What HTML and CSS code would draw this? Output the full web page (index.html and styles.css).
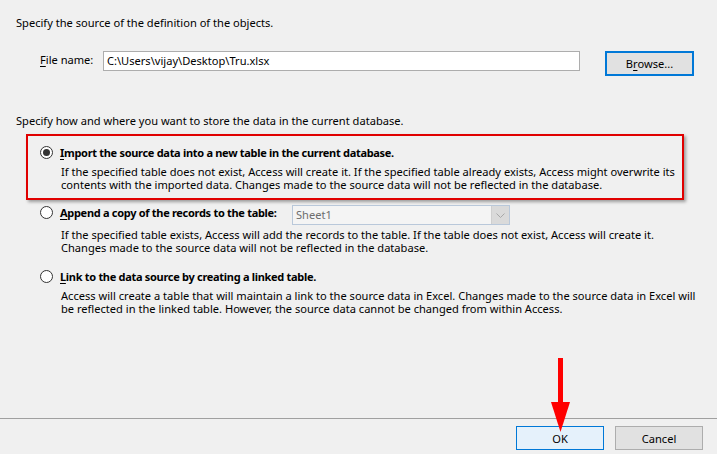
FILE: index.html
```html
<!DOCTYPE html>
<html lang="en">
<head>
    <meta charset="UTF-8">
    <title>Get External Data - Excel Spreadsheet</title>
    <link rel="stylesheet" href="styles.css">
</head>
<body>
    <div class="dialog">
        <p class="intro">Specify the source of the definition of the objects.</p>

        <div class="file-row">
            <label class="file-label" for="file"><u>F</u>ile name:</label>
            <div class="file-input" id="file">C:\Users\vijay\Desktop\Tru.xlsx</div>
            <button class="btn btn-browse" type="button">B<u>r</u>owse...</button>
        </div>

        <p class="intro intro-store">Specify how and where you want to store the data in the current database.</p>

        <div class="option option-selected">
            <span class="radio checked"></span>
            <div class="option-body">
                <div class="option-title"><u>I</u>mport the source data into a new table in the current database.</div>
                <p class="option-desc">If the specified table does not exist, Access will create it. If the specified table already exists, Access might overwrite its<br>contents with the imported data. Changes made to the source data will not be reflected in the database.</p>
            </div>
        </div>

        <div class="option option-append">
            <span class="radio radio-append"></span>
            <div class="option-body">
                <div class="append-row">
                    <div class="option-title"><u>A</u>ppend a copy of the records to the table:</div>
                    <div class="select">
                        <span class="select-value">Sheet1</span>
                        <span class="select-arrow">
                            <svg width="9" height="5" viewBox="0 0 9 5"><path d="M0.5 0.5 L4.5 4.5 L8.5 0.5" fill="none" stroke="#a8a8a8" stroke-width="1"/></svg>
                        </span>
                    </div>
                </div>
                <p class="option-desc desc-append">If the specified table exists, Access will add the records to the table. If the table does not exist, Access will create it.<br>Changes made to the source data will not be reflected in the database.</p>
            </div>
        </div>

        <div class="option option-link">
            <span class="radio"></span>
            <div class="option-body">
                <div class="option-title"><u>L</u>ink to the data source by creating a linked table.</div>
                <p class="option-desc">Access will create a table that will maintain a link to the source data in Excel. Changes made to the source data in Excel will<br>be reflected in the linked table. However, the source data cannot be changed from within Access.</p>
            </div>
        </div>
    </div>

    <div class="footer">
        <button class="btn btn-ok" type="button">OK</button>
        <button class="btn btn-cancel" type="button">Cancel</button>
    </div>

    <!-- annotation arrow pointing at OK -->
    <svg class="arrow" width="22" height="76" viewBox="0 0 22 76">
        <rect x="8" y="0" width="5" height="45" fill="#ff0000"/>
        <polygon points="1,44 20,44 10.5,74" fill="#ff0000"/>
    </svg>
</body>
</html>
```

FILE: styles.css
```css
* {
    margin: 0;
    padding: 0;
    box-sizing: border-box;
}

body {
    position: relative;
    width: 717px;
    height: 454px;
    overflow: hidden;
    background: #f0f0f0;
    font-family: 'Noto Sans', 'Open Sans', sans-serif;
    font-size: 11.1px;
    line-height: 13px;
    color: #000;
}

u {
    text-decoration: underline;
    text-underline-offset: 2px;
}

.dialog {
    height: 418px;
    padding: 16px 0 0 0;
}

.intro {
    padding-left: 16px;
}

.intro-store {
    margin-top: 38px;
}

/* File name row */
.file-row {
    display: flex;
    align-items: flex-start;
    margin-top: 22px;
    padding-left: 40px;
}

.file-label {
    width: 63px;
    padding-top: 2px;
}

.file-input {
    width: 477px;
    height: 20px;
    padding: 2px 3px;
    background: #fff;
    border: 1px solid #adadad;
}

.btn {
    font-family: inherit;
    font-size: 11.1px;
    color: #000;
    background: #e1e1e1;
    border: 1px solid #adadad;
    cursor: pointer;
}

.btn-browse {
    width: 89px;
    height: 25px;
    margin-left: 25px;
    border: 2px solid #0078d7;
}

/* Options */
.option {
    display: flex;
    align-items: flex-start;
    width: 658px;
    margin-left: 26px;
    padding-left: 14px;
}

.option-selected {
    margin-top: 7px;
    border: 2px solid #e00000;
    padding: 10px 0 7px 12px;
    box-shadow: 2px 2px 3px rgba(0, 0, 0, 0.35);
}

.option-append {
    margin-top: 5px;
}

.option-link {
    margin-top: 16px;
}

.radio {
    flex: none;
    width: 13px;
    height: 13px;
    margin-right: 7px;
    border: 1px solid #333;
    border-radius: 50%;
    background: #fff;
    display: flex;
    align-items: center;
    justify-content: center;
}

.radio.checked::after {
    content: "";
    width: 7px;
    height: 7px;
    border-radius: 50%;
    background: #333;
}

.radio-append {
    margin-top: 1px;
}

.option-title {
    font-weight: bold;
    font-size: 11px;
    letter-spacing: -0.3px;
    white-space: nowrap;
}

.option-desc {
    margin-top: 6px;
    padding-left: 1px;
    white-space: nowrap;
}

.desc-append {
    margin-top: 3px;
}

.append-row {
    display: flex;
    align-items: flex-start;
}

.append-row .option-title {
    padding-top: 1px;
    width: 232px;
}

.select {
    display: flex;
    width: 218px;
    height: 20px;
    border: 1px solid #b9c8da;
    background: #f4f4f4;
}

.select-value {
    flex: 1;
    padding: 2px 3px;
    color: #6d6d6d;
}

.select-arrow {
    width: 18px;
    display: flex;
    align-items: center;
    justify-content: center;
    background: #dadada;
    border-left: 1px solid #cfcfcf;
}

/* Footer */
.footer {
    display: flex;
    justify-content: flex-end;
    gap: 11px;
    border-top: 1px solid #a0a0a0;
    padding: 7px 14px 0 0;
}

.btn-ok,
.btn-cancel {
    width: 88px;
    height: 24px;
}

.btn-ok {
    background: #e5f1fb;
    border-color: #0078d7;
}

.arrow {
    position: absolute;
    left: 550px;
    top: 358px;
}
```
